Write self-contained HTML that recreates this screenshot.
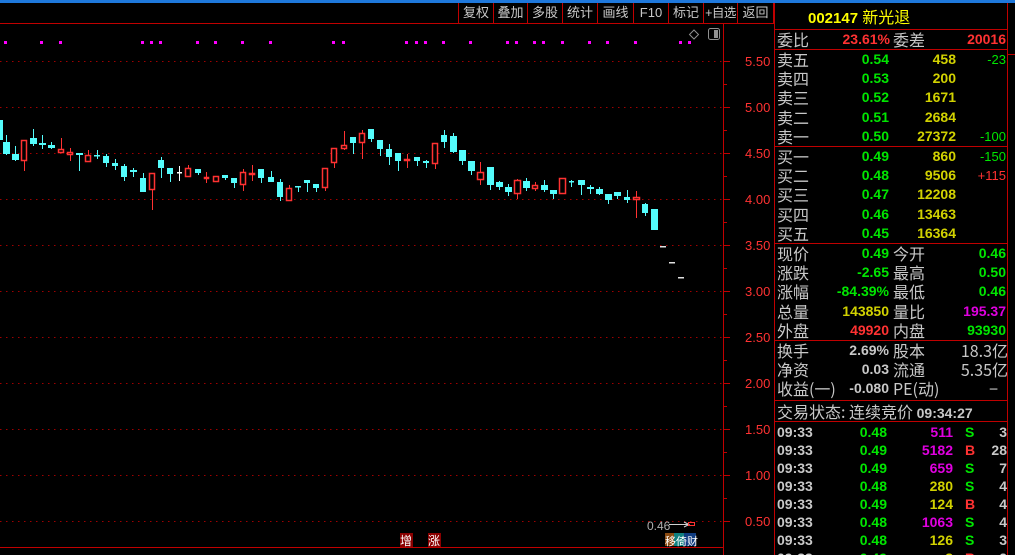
<!DOCTYPE html>
<html><head><meta charset="utf-8">
<style>
*{margin:0;padding:0;box-sizing:border-box}
html{width:1015px;height:555px;overflow:hidden;background:#000}
body{width:1015px;height:555px;background:#000;position:relative;overflow:hidden;font-family:"Liberation Sans","Noto Sans CJK SC",sans-serif}
.a{position:absolute;white-space:nowrap}
.cn{font-family:"Noto Sans CJK SC","WenQuanYi Zen Hei",sans-serif;font-size:16px;color:#c8c8c8;line-height:19px}
.n{font-family:"Liberation Sans",sans-serif;font-weight:bold;font-size:14px;line-height:19px;text-align:right}
.g{color:#00e600}.y{color:#d2d200}.r{color:#ff3232}.m{color:#e000e0}.w{color:#c8c8c8}
.tb{position:absolute;top:3px;height:20px;border-left:1px solid #c00000;color:#c8c8c8;font-size:13px;line-height:20px;text-align:center;white-space:nowrap;overflow:hidden;font-family:"Liberation Sans","Noto Sans CJK SC",sans-serif}
.hl{position:absolute;left:774px;width:234px;height:1px;background:#c00000}
</style></head><body>
<div class="a" style="left:0;top:0;width:1015px;height:3px;background:#1e78dc"></div>
<div class="a" style="left:0;top:23px;width:774px;height:1px;background:#c00000"></div>
<div class="tb" style="left:458px;width:35px">复权</div>
<div class="tb" style="left:493px;width:34px">叠加</div>
<div class="tb" style="left:527px;width:35px">多股</div>
<div class="tb" style="left:562px;width:35px">统计</div>
<div class="tb" style="left:597px;width:36px">画线</div>
<div class="tb" style="left:633px;width:35px">F10</div>
<div class="tb" style="left:668px;width:35px">标记</div>
<div class="tb" style="left:703px;width:34px;font-size:12.5px;letter-spacing:-0.5px">+自选</div>
<div class="tb" style="left:737px;width:37px;border-right:1px solid #c00000">返回</div>

<svg class="a" style="left:0;top:0" width="774" height="555">
<g stroke="#a00000" stroke-dasharray="1.5,4.5" stroke-width="1">
<line x1="0" y1="61.5" x2="723" y2="61.5"/><line x1="0" y1="107.5" x2="723" y2="107.5"/><line x1="0" y1="153.5" x2="723" y2="153.5"/><line x1="0" y1="199.5" x2="723" y2="199.5"/><line x1="0" y1="245.5" x2="723" y2="245.5"/><line x1="0" y1="291.5" x2="723" y2="291.5"/><line x1="0" y1="337.5" x2="723" y2="337.5"/><line x1="0" y1="383.5" x2="723" y2="383.5"/><line x1="0" y1="429.5" x2="723" y2="429.5"/><line x1="0" y1="475.5" x2="723" y2="475.5"/><line x1="0" y1="521.5" x2="723" y2="521.5"/>
</g>
<line x1="723.5" y1="23" x2="723.5" y2="555" stroke="#c00000"/>
<line x1="0" y1="547.5" x2="723" y2="547.5" stroke="#c00000"/>
<g stroke="#c00000">
<line x1="723" y1="61.5" x2="730" y2="61.5"/><line x1="723" y1="84.5" x2="727" y2="84.5"/><line x1="723" y1="107.5" x2="730" y2="107.5"/><line x1="723" y1="130.5" x2="727" y2="130.5"/><line x1="723" y1="153.5" x2="730" y2="153.5"/><line x1="723" y1="176.5" x2="727" y2="176.5"/><line x1="723" y1="199.5" x2="730" y2="199.5"/><line x1="723" y1="222.5" x2="727" y2="222.5"/><line x1="723" y1="245.5" x2="730" y2="245.5"/><line x1="723" y1="268.5" x2="727" y2="268.5"/><line x1="723" y1="291.5" x2="730" y2="291.5"/><line x1="723" y1="314.5" x2="727" y2="314.5"/><line x1="723" y1="337.5" x2="730" y2="337.5"/><line x1="723" y1="360.5" x2="727" y2="360.5"/><line x1="723" y1="383.5" x2="730" y2="383.5"/><line x1="723" y1="406.5" x2="727" y2="406.5"/><line x1="723" y1="429.5" x2="730" y2="429.5"/><line x1="723" y1="452.5" x2="727" y2="452.5"/><line x1="723" y1="475.5" x2="730" y2="475.5"/><line x1="723" y1="498.5" x2="727" y2="498.5"/><line x1="723" y1="521.5" x2="730" y2="521.5"/>
</g>
<g fill="#ff3232" font-family="Liberation Sans" font-size="13">
<text x="745" y="66">5.50</text><text x="745" y="112">5.00</text><text x="745" y="158">4.50</text><text x="745" y="204">4.00</text><text x="745" y="250">3.50</text><text x="745" y="296">3.00</text><text x="745" y="342">2.50</text><text x="745" y="388">2.00</text><text x="745" y="434">1.50</text><text x="745" y="480">1.00</text><text x="745" y="526">0.50</text>
</g>
<g fill="#ff00ff">
<rect x="4" y="41" width="3" height="3"/><rect x="40" y="41" width="3" height="3"/><rect x="59" y="41" width="3" height="3"/><rect x="141" y="41" width="3" height="3"/><rect x="150" y="41" width="3" height="3"/><rect x="159" y="41" width="3" height="3"/><rect x="196" y="41" width="3" height="3"/><rect x="214" y="41" width="3" height="3"/><rect x="241" y="41" width="3" height="3"/><rect x="269" y="41" width="3" height="3"/><rect x="332" y="41" width="3" height="3"/><rect x="342" y="41" width="3" height="3"/><rect x="405" y="41" width="3" height="3"/><rect x="415" y="41" width="3" height="3"/><rect x="424" y="41" width="3" height="3"/><rect x="442" y="41" width="3" height="3"/><rect x="469" y="41" width="3" height="3"/><rect x="506" y="41" width="3" height="3"/><rect x="515" y="41" width="3" height="3"/><rect x="533" y="41" width="3" height="3"/><rect x="542" y="41" width="3" height="3"/><rect x="561" y="41" width="3" height="3"/><rect x="588" y="41" width="3" height="3"/><rect x="606" y="41" width="3" height="3"/><rect x="634" y="41" width="3" height="3"/><rect x="679" y="41" width="3" height="3"/><rect x="688" y="41" width="3" height="3"/>
</g>
<path d="M694 30 L698.5 34.5 L694 39 L689.5 34.5 Z" fill="none" stroke="#909090"/>
<rect x="708.5" y="28.5" width="11" height="11" rx="2" fill="none" stroke="#909090"/><rect x="714" y="30" width="4" height="8" fill="#909090"/>
<g id="candles"></g>
<g fill="#e0e0e0"><rect x="660" y="246" width="6" height="1.5"/><rect x="669" y="262" width="6" height="1.5"/><rect x="678" y="277" width="6" height="1.5"/></g>
<text x="647" y="530" fill="#b0b0b0" font-family="Liberation Sans" font-size="12">0.46</text>
<line x1="669" y1="524.5" x2="688" y2="524.5" stroke="#d0d0d0"/><path d="M684 522 L689 524.5 L684 527" fill="none" stroke="#d0d0d0"/>
<rect x="688.5" y="522.5" width="6" height="3" fill="none" stroke="#ff3232"/>
<rect x="665" y="533" width="9" height="13" fill="#8a4a10"/><rect x="674" y="533" width="10" height="13" fill="#108080"/><rect x="684" y="533" width="12" height="13" fill="#103c80"/>
<text x="665" y="545" fill="#fff" font-family="Noto Sans CJK SC" font-size="11">移倚财</text>
<rect x="400" y="533" width="13" height="14" fill="#8a0000"/><rect x="428" y="533" width="13" height="14" fill="#8a0000"/>
<text x="400" y="545" fill="#fff" font-family="Noto Sans CJK SC" font-size="12">增</text><text x="428" y="545" fill="#fff" font-family="Noto Sans CJK SC" font-size="12">涨</text>
</svg>

<div class="a" style="left:774px;top:3px;width:1px;height:552px;background:#c00000"></div>
<div class="a" style="left:1007px;top:3px;width:1px;height:552px;background:#c00000"></div>
<div class="a" style="left:1008px;top:54px;width:7px;height:1px;background:#c00000"></div>
<div class="hl" style="top:29px"></div>
<div class="hl" style="top:49px"></div>
<div class="hl" style="top:146px"></div>
<div class="hl" style="top:243px"></div>
<div class="hl" style="top:340px"></div>
<div class="hl" style="top:400px"></div>
<div class="hl" style="top:421px"></div>

<div class="a" style="left:808px;top:6px;font-size:15px;font-weight:bold;color:#ffff00;line-height:20px">002147 <span style="font-family:'Noto Sans CJK SC',sans-serif;font-weight:normal;font-size:16px">新光退</span></div>

<div id="rows"></div>

<script>
(function(){
var C=[
[0,3,120,140,120,140,'c'],[3,10,142,154,135,155,'c'],[12,19,154,160,146,161,'c'],[21,27,140,161,140,171,'r'],[30,37,138,144,129,146,'c'],[39,46,143,145,135,149,'c'],[48,55,145,148,142,149,'c'],[58,64,149,153,138,153,'r'],[67,73,152,155,148,161,'r'],[76,83,153,155,153,171,'c'],[85,91,155,162,150,162,'r'],[94,100,155,156,150,159,'c'],[103,109,156,163,154,167,'c'],[112,118,163,166,159,170,'c'],[121,127,166,177,164,181,'c'],[130,137,170,172,168,177,'c'],[140,146,178,192,173,192,'c'],[149,155,173,190,173,210,'r'],[158,164,160,168,157,178,'c'],[167,173,168,174,168,182,'c'],[177,182,172,173,166,181,'w'],[185,191,168,177,165,177,'r'],[195,201,169,173,169,175,'c'],[204,209,177,179,172,183,'r'],[213,219,176,182,176,182,'r'],[222,228,175,178,175,180,'c'],[231,237,178,183,178,188,'c'],[240,246,172,185,169,191,'r'],[249,255,173,175,165,181,'r'],[258,264,169,178,169,183,'c'],[268,274,177,182,171,182,'c'],[277,283,182,197,179,201,'c'],[286,292,188,201,185,201,'r'],[295,301,186,187,186,192,'c'],[304,310,180,183,180,192,'c'],[313,319,184,188,184,192,'c'],[322,328,168,188,168,191,'r'],
[331,337,148,163,148,168,'r'],[341,347,145,149,131,150,'r'],[350,356,137,143,137,154,'c'],[359,365,133,143,130,159,'r'],[368,374,129,139,129,142,'c'],[377,383,140,149,140,156,'c'],[386,392,149,157,144,165,'c'],[395,401,153,161,153,171,'c'],[404,410,159,161,154,168,'r'],[414,420,157,161,157,166,'c'],[423,429,161,163,160,168,'c'],[432,438,143,164,143,169,'r'],[441,447,135,142,130,148,'c'],[450,457,136,152,133,153,'c'],[459,466,150,161,150,165,'c'],[468,475,161,171,161,175,'c'],[477,484,172,180,162,185,'r'],[487,494,167,185,167,190,'c'],[496,503,182,187,181,190,'c'],[505,512,187,192,184,196,'c'],[514,521,180,194,179,199,'r'],[523,530,181,188,178,191,'c'],[532,538,185,189,182,191,'r'],[541,548,185,190,180,192,'c'],[550,557,190,194,190,199,'c'],[559,566,178,194,178,194,'r'],[569,574,181,182,180,187,'c'],[578,585,180,185,180,195,'c'],[587,594,187,189,185,194,'c'],[596,603,189,194,187,195,'c'],[605,612,194,200,194,204,'c'],[614,621,192,196,192,199,'c'],[624,630,197,200,190,203,'c'],[633,640,197,200,191,218,'r'],[642,648,204,213,203,216,'c'],[651,658,209,230,209,230,'c']];
var s='';
C.forEach(function(k){var cx=Math.floor((k[0]+k[1])/2)+.5;var col=k[6]=='c'?'#54fcfc':(k[6]=='r'?'#ff3232':'#ffffff');
s+='<line x1="'+cx+'" y1="'+k[4]+'" x2="'+cx+'" y2="'+k[5]+'" stroke="'+col+'"/>';
var h=Math.max(k[3]-k[2],1.5);
if(k[6]=='r')s+='<rect x="'+(k[0]+.5)+'" y="'+(k[2]+.5)+'" width="'+(k[1]-k[0]-1)+'" height="'+Math.max(h-1,1)+'" fill="#000" stroke="'+col+'" stroke-width="1.5"/>';
else s+='<rect x="'+k[0]+'" y="'+k[2]+'" width="'+(k[1]-k[0])+'" height="'+h+'" fill="'+col+'"/>';});
document.getElementById('candles').innerHTML=s;

var h='';
function t(x,y,txt,cls){h+='<div class="a '+cls+'" style="left:'+x+'px;top:'+y+'px">'+txt+'</div>';}
function rt(r,y,txt,cls){h+='<div class="a n '+cls+'" style="right:'+(1015-r)+'px;top:'+y+'px">'+txt+'</div>';}
t(777,30,'委比','cn');rt(890,30,'23.61%','r');t(893,30,'委差','cn');rt(1006,30,'20016','r');
var sell=[['卖五','0.54','458','-23','g'],['卖四','0.53','200','',''],['卖三','0.52','1671','',''],['卖二','0.51','2684','',''],['卖一','0.50','27372','-100','g']];
sell.forEach(function(r,i){var y=50+i*19.2;t(777,y,r[0],'cn');rt(889,y,r[1],'g');rt(956,y,r[2],'y');if(r[3])h+='<div class="a '+r[4]+'" style="right:9px;top:'+y+'px;font-size:13px;line-height:19px">'+r[3]+'</div>';});
var buy=[['买一','0.49','860','-150','g'],['买二','0.48','9506','+115','r'],['买三','0.47','12208','',''],['买四','0.46','13463','',''],['买五','0.45','16364','','']];
buy.forEach(function(r,i){var y=147+i*19.2;t(777,y,r[0],'cn');rt(889,y,r[1],'g');rt(956,y,r[2],'y');if(r[3])h+='<div class="a '+r[4]+'" style="right:9px;top:'+y+'px;font-size:13px;line-height:19px">'+r[3]+'</div>';});
var q=[['现价','0.49','g','今开','0.46','g'],['涨跌','-2.65','g','最高','0.50','g'],['涨幅','-84.39%','g','最低','0.46','g'],['总量','143850','y','量比','195.37','m'],['外盘','49920','r','内盘','93930','g']];
q.forEach(function(r,i){var y=244+i*19.2;t(777,y,r[0],'cn');rt(889,y,r[1],r[2]);t(893,y,r[3],'cn');rt(1006,y,r[4],r[5]);});
var q2=[['换手','2.69%','股本','18.3亿'],['净资','0.03','流通','5.35亿'],['收益(一)','-0.080','PE(动)','&minus;']];
q2.forEach(function(r,i){var y=341+i*19;t(777,y,r[0],'cn');rt(889,y,r[1],'w');t(893,y,r[2],'cn');h+='<div class="a cn" style="right:'+(i==2?17:7)+'px;top:'+y+'px">'+r[3]+'</div>';});
t(777,402,'交易状态: 连续竞价 <span style="font-family:Liberation Sans;font-weight:bold;font-size:14px">09:34:27</span>','cn');
var tk=[['0.48','511','m','S','3'],['0.49','5182','m','B','28'],['0.49','659','m','S','7'],['0.48','280','y','S','4'],['0.49','124','y','B','4'],['0.48','1063','m','S','4'],['0.48','126','y','S','3'],['0.49','8','y','B','2']];
tk.forEach(function(r,i){var y=423+i*18;h+='<div class="a n w" style="left:777px;top:'+y+'px;text-align:left">09:33</div>';rt(887,y,r[0],'g');rt(953,y,r[1],r[2]);h+='<div class="a n '+(r[3]=='S'?'g':'r')+'" style="left:965px;top:'+y+'px">'+r[3]+'</div>';rt(1007,y,r[4],'w');});
document.getElementById('rows').innerHTML=h;
})();
</script>
</body></html>
